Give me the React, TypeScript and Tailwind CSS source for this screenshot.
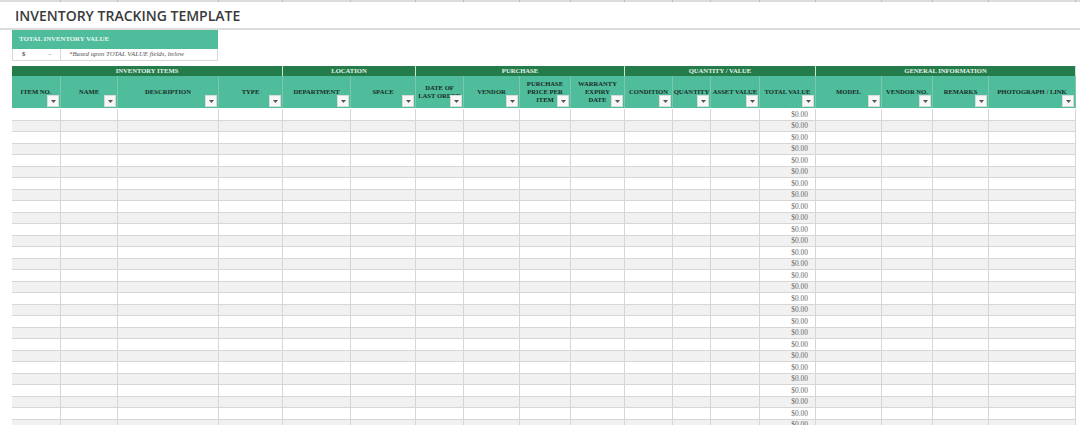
const COLS = [49, 57, 101, 64, 68, 65, 48, 56, 51, 54, 48, 38, 49, 56, 66, 51, 56, 87];
const gridCols =
  "grid grid-cols-[49px_57px_101px_64px_68px_65px_48px_56px_51px_54px_48px_38px_49px_56px_66px_51px_56px_87px]";

const GROUPS = [
  { title: "INVENTORY ITEMS", width: "w-[271px]" },
  { title: "LOCATION", width: "w-[133px]" },
  { title: "PURCHASE", width: "w-[209px]" },
  { title: "QUANTITY / VALUE", width: "w-[191px]" },
  { title: "GENERAL INFORMATION", width: "w-[260px]" },
];

const HEADERS = [
  ["ITEM NO."],
  ["NAME"],
  ["DESCRIPTION"],
  ["TYPE"],
  ["DEPARTMENT"],
  ["SPACE"],
  ["DATE OF", "LAST ORDER"],
  ["VENDOR"],
  ["PURCHASE", "PRICE PER", "ITEM"],
  ["WARRANTY", "EXPIRY", "DATE"],
  ["CONDITION"],
  ["QUANTITY"],
  ["ASSET VALUE"],
  ["TOTAL VALUE"],
  ["MODEL"],
  ["VENDOR NO."],
  ["REMARKS"],
  ["PHOTOGRAPH / LINK"],
];

const TOTAL_COL = 13;

const FilterButton = () => (
  <div className="absolute right-px bottom-px flex h-[12px] w-[12px] items-center justify-center border border-[#d8dbd9] bg-[#f6f7f6]">
    <svg width="5" height="3" viewBox="0 0 5 3">
      <path d="M0 0h5L2.5 3z" fill="#555" />
    </svg>
  </div>
);

const HeaderCell = ({ lines }: { lines: string[] }) => (
  <div className="relative flex h-[32px] flex-col items-center justify-center overflow-hidden border-r border-[#7cc7ac] bg-[#4fbd9c] pb-px text-center text-[6.6px] leading-[8px] font-bold text-[#1a2a24]">
    {lines.map((line) => (
      <span key={line} className="whitespace-nowrap">
        {line}
      </span>
    ))}
    <FilterButton />
  </div>
);

const Row = ({ shaded }: { shaded: boolean }) => (
  <div className={`${gridCols} h-[11.5px] ${shaded ? "bg-[#f1f1f1]" : "bg-white"}`}>
    {COLS.map((_, i) => (
      <div
        key={i}
        className="flex items-center justify-end border-r border-b border-[#d6d6d6] pr-[7px] text-[7.4px] leading-none text-[#666]"
      >
        {i === TOTAL_COL ? "$0.00" : ""}
      </div>
    ))}
  </div>
);

export default function App() {
  return (
    <div className="h-[425px] w-[1080px] overflow-hidden bg-white font-['Liberation_Serif',serif]">
      <div className="h-[2px] bg-[#dcdcdc] pl-[12px]">
        <div className={`${gridCols} h-full`}>
          {COLS.map((_, i) => (
            <div key={i} className="border-r border-[#bdbdbd]" />
          ))}
        </div>
      </div>
      <div className="flex h-[28px] items-center border-b-2 border-[#dcdcdc] pl-[15px] font-['Open_Sans',sans-serif] text-[14px] font-semibold text-[#3a3a3a]">
        INVENTORY TRACKING TEMPLATE
      </div>

      <div className="ml-[12px] w-[206px]">
        <div className="flex h-[19px] items-center bg-[#4fbd9c] pl-[7px] text-[6.8px] font-bold text-[#e8f6f1]">
          TOTAL INVENTORY VALUE
        </div>
        <div className="flex h-[12px] border-x border-b border-[#d8d8d8] text-[6.8px] leading-none text-[#555]">
          <div className="flex w-[48px] items-center justify-between border-r border-[#d8d8d8] pr-[9px] pl-[9px]">
            <span className="font-bold">$</span>
            <span>-</span>
          </div>
          <div className="flex items-center pl-[8px] italic">*Based upon TOTAL VALUE fields, below</div>
        </div>
      </div>

      <div className="mt-[5px] ml-[12px] w-[1064px]">
        <div className="flex h-[10px]">
          {GROUPS.map((g) => (
            <div
              key={g.title}
              className={`${g.width} flex items-center justify-center border-r border-[#cfe5da] bg-[#237c4a] text-[6.6px] leading-none font-bold text-[#e6f2eb]`}
            >
              {g.title}
            </div>
          ))}
        </div>
        <div className={gridCols}>
          {HEADERS.map((lines) => (
            <HeaderCell key={lines.join()} lines={lines} />
          ))}
        </div>
        <div className="h-[1px] bg-white" />
        <div className="shadow-[inset_1px_0_0_#d6d6d6]">
          {Array.from({ length: 28 }, (_, i) => (
            <Row key={i} shaded={i % 2 === 1} />
          ))}
        </div>
      </div>
    </div>
  );
}
